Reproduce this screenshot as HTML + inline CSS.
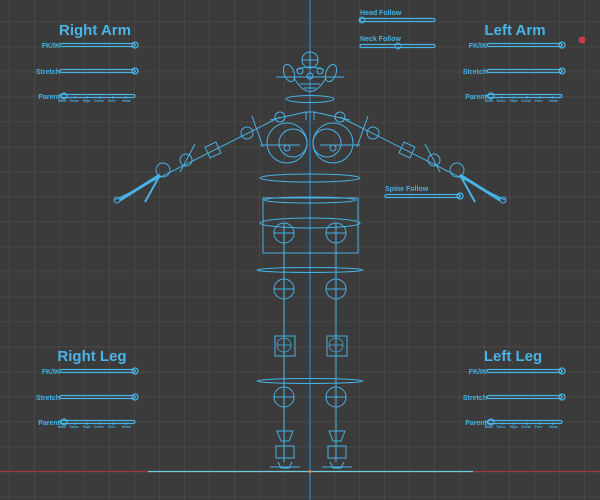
<!DOCTYPE html>
<html><head><meta charset="utf-8"><style>
html,body{margin:0;padding:0;background:#3b3b3b;overflow:hidden}
svg{display:block}
text{font-family:"Liberation Sans",sans-serif;fill:#46b2e6}
.t{font-size:15px;font-weight:bold;fill:#4ab4e8}
.l{font-size:7px;font-weight:bold}
.s{font-size:3.5px;font-weight:bold}
</style></head><body>
<svg width="600" height="500" viewBox="0 0 600 500" xmlns="http://www.w3.org/2000/svg">
<defs>
<pattern id="g" x="9.3" y="21.7" width="25" height="25" patternUnits="userSpaceOnUse">
<path d="M0 0H25M0 0V25" stroke="#535353" stroke-width="1" fill="none"/>
</pattern>
<g id="sl"><rect x="0" y="-1.5" width="75" height="3" rx="1.5" fill="none" stroke="#46b2e6" stroke-width="1.3"/><circle cx="75" cy="0" r="3" fill="none" stroke="#46b2e6" stroke-width="1.3"/><circle cx="75" cy="0" r="1" fill="#46b2e6"/></g>
<g id="pr"><rect x="0" y="-1.5" width="75" height="3" rx="1.5" fill="none" stroke="#46b2e6" stroke-width="1.3"/><circle cx="4" cy="0" r="3" fill="none" stroke="#46b2e6" stroke-width="1.3"/>
<path d="M15 0v3M27 0v3M40 0v3M53 0v3M66 0v3" stroke="#46b2e6" stroke-width=".8"/>
<text class="s" x="-2" y="6">Main</text><text class="s" x="9" y="6">Torso</text><text class="s" x="23" y="6">Hips</text><text class="s" x="34" y="6">Chest</text><text class="s" x="48" y="6">Fore</text><text class="s" x="62" y="6">Head</text></g>
<g id="cc"><circle r="10" fill="none" stroke="#46b2e6"/><path d="M-10 0H10M0-10V10" stroke="#46b2e6"/></g>
</defs>
<rect width="600" height="500" fill="#3b3b3b"/>
<rect width="600" height="500" fill="url(#g)"/>
<line x1="310" y1="0" x2="310" y2="500" stroke="#2f7fc4" stroke-width="1.2"/>
<line x1="0" y1="471.5" x2="600" y2="471.5" stroke="#a03a40" stroke-width="1.2"/>
<line x1="148" y1="471.5" x2="473" y2="471.5" stroke="#6ad0e0" stroke-width="1.2"/>
<circle cx="582" cy="40" r="3.5" fill="#c83848"/>

<text class="t" x="95" y="35" text-anchor="middle">Right Arm</text>
<text class="l" x="60" y="48" text-anchor="end">FK/IK</text><use href="#sl" x="60" y="45"/>
<text class="l" x="60" y="74" text-anchor="end">Stretch</text><use href="#sl" x="60" y="71"/>
<text class="l" x="60" y="99" text-anchor="end">Parent</text><use href="#pr" x="60" y="96"/>

<text class="t" x="515" y="35" text-anchor="middle">Left Arm</text>
<text class="l" x="487" y="48" text-anchor="end">FK/IK</text><use href="#sl" x="487" y="45"/>
<text class="l" x="487" y="74" text-anchor="end">Stretch</text><use href="#sl" x="487" y="71"/>
<text class="l" x="487" y="99" text-anchor="end">Parent</text><use href="#pr" x="487" y="96"/>

<text class="t" x="92" y="361" text-anchor="middle">Right Leg</text>
<text class="l" x="60" y="374" text-anchor="end">FK/IK</text><use href="#sl" x="60" y="371"/>
<text class="l" x="60" y="400" text-anchor="end">Stretch</text><use href="#sl" x="60" y="397"/>
<text class="l" x="60" y="425" text-anchor="end">Parent</text><use href="#pr" x="60" y="422"/>

<text class="t" x="513" y="361" text-anchor="middle">Left Leg</text>
<text class="l" x="487" y="374" text-anchor="end">FK/IK</text><use href="#sl" x="487" y="371"/>
<text class="l" x="487" y="400" text-anchor="end">Stretch</text><use href="#sl" x="487" y="397"/>
<text class="l" x="487" y="425" text-anchor="end">Parent</text><use href="#pr" x="487" y="422"/>

<text class="l" x="360" y="15">Head Follow</text>
<rect x="360" y="18.5" width="75" height="3" rx="1.5" fill="none" stroke="#46b2e6" stroke-width="1.3"/><circle cx="362" cy="20" r="3" fill="none" stroke="#46b2e6"/>
<text class="l" x="360" y="41">Neck Follow</text>
<rect x="360" y="44.5" width="75" height="3" rx="1.5" fill="none" stroke="#46b2e6" stroke-width="1.3"/><circle cx="398" cy="46" r="3" fill="none" stroke="#46b2e6"/>
<text class="l" x="385" y="191">Spine Follow</text>
<use href="#sl" x="385" y="196"/>

<g fill="none" stroke="#46b2e6" stroke-width="1">
<circle cx="310" cy="60" r="8"/><path d="M302 60H318M310 52V68"/>
<path d="M276 77H344"/>
<ellipse cx="289" cy="73" rx="5" ry="9" transform="rotate(-20 289 73)"/>
<ellipse cx="331" cy="73" rx="5" ry="9" transform="rotate(20 331 73)"/>
<path d="M296 70Q310 64 324 70M294 78Q310 105 326 78M300 84H320M304 88H316"/>
<circle cx="300" cy="71" r="3"/><circle cx="320" cy="71" r="3"/><circle cx="310" cy="76" r="3"/>
<ellipse cx="310" cy="99" rx="24" ry="3.5"/>
<path d="M270 120L306 112H314L350 120M306 112V120M314 112V120"/>
<circle cx="280" cy="117" r="5"/><circle cx="340" cy="117" r="5"/>
<path d="M260 145H300M320 145H360"/>
<circle cx="287" cy="143" r="20"/><circle cx="293" cy="143" r="14"/><circle cx="287" cy="148" r="3"/>
<circle cx="333" cy="143" r="20"/><circle cx="327" cy="143" r="14"/><circle cx="333" cy="148" r="3"/>
<path d="M252 116L263 147M368 116L357 147"/>
<path d="M280 117L115 200M340 117L505 200"/>
<circle cx="247" cy="133" r="6"/><circle cx="373" cy="133" r="6"/>
<rect x="207" y="144" width="12" height="12" transform="rotate(-25 213 150)"/><rect x="401" y="144" width="12" height="12" transform="rotate(25 407 150)"/>
<path d="M195 144L180 172M425 144L440 172"/>
<circle cx="186" cy="160" r="6"/><circle cx="434" cy="160" r="6"/>
<circle cx="163" cy="170" r="7"/><circle cx="457" cy="170" r="7"/>
<path d="M160 175L120 200M460 175L500 200" stroke-width="3"/>
<path d="M160 175L145 202M460 175L475 202" stroke-width="2"/>
<circle cx="117" cy="200" r="3"/><circle cx="503" cy="200" r="3"/>
<ellipse cx="310" cy="178" rx="50" ry="4"/>
<rect x="263" y="198" width="95" height="55"/>
<ellipse cx="310" cy="200" rx="46" ry="3"/>
<ellipse cx="310" cy="223" rx="50" ry="5"/>
<ellipse cx="310" cy="270" rx="53" ry="2.5"/>
<ellipse cx="310" cy="381" rx="53" ry="2.5"/>
<path d="M284 233V462M336 233V462"/>
<rect x="275" y="336" width="20" height="20"/><rect x="327" y="336" width="20" height="20"/>
<path d="M277 431H293L289 441H281ZM329 431H345L341 441H333Z"/>
<rect x="276" y="446" width="18" height="12"/><rect x="328" y="446" width="18" height="12"/>
<path d="M270 467H300M322 467H352M278 462L281 468H289L292 462M330 462L333 468H341L344 462"/>
</g>
<use href="#cc" x="284" y="233"/><use href="#cc" x="336" y="233"/>
<use href="#cc" x="284" y="289"/><use href="#cc" x="336" y="289"/>
<g transform="translate(284 345) scale(.7)"><use href="#cc"/></g>
<g transform="translate(336 345) scale(.7)"><use href="#cc"/></g>
<use href="#cc" x="284" y="397"/><use href="#cc" x="336" y="397"/>
<circle cx="310" cy="471.5" r="1.5" fill="#e08030"/>
</svg>
</body></html>
